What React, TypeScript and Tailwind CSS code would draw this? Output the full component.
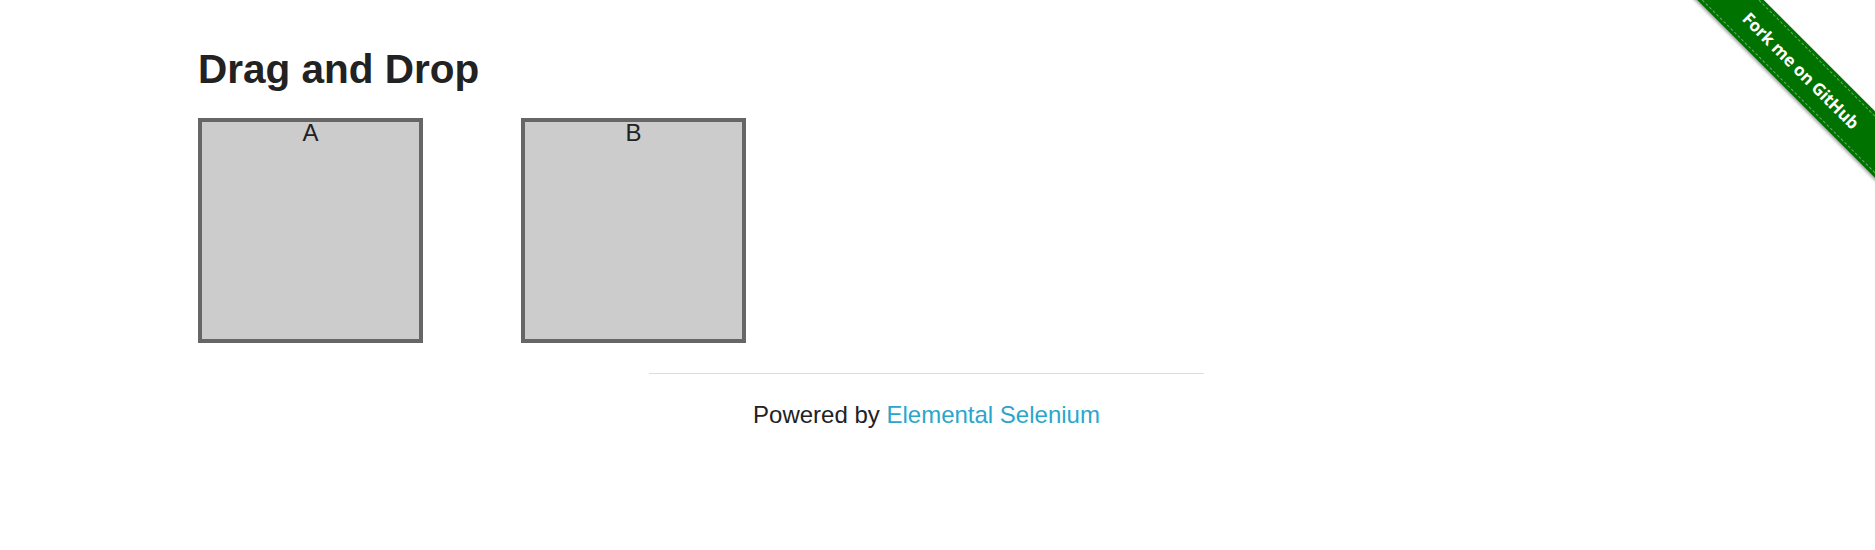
export default function App() {
  return (
    <div className="relative flex h-[550px] w-full flex-col overflow-hidden bg-white font-['Liberation_Sans',Arial,sans-serif] text-[#222]">
      {/* Fork ribbon */}
      <div className="absolute right-[-96px] top-[47px] flex h-[47px] w-[340px] rotate-45 items-center justify-center bg-[#007200] shadow-[0_2px_3px_rgba(0,0,0,0.35)]">
        <div className="absolute inset-x-0 top-[3px] border-t border-dashed border-white/40" />
        <div className="absolute inset-x-0 bottom-[3px] border-b border-dashed border-white/40" />
        <span className="font-['Open_Sans',sans-serif] text-[17px] font-bold tracking-[-0.2px] text-white">
          Fork me on GitHub
        </span>
      </div>

      <div className="flex flex-col gap-[27px] pl-[198px] pt-[47px]">
        <h3 className="text-[40.5px] font-bold leading-[44px]">Drag and Drop</h3>

        <div className="flex gap-[98px]">
          <div className="h-[225px] w-[225px] border-4 border-[#666] bg-[#ccc] text-center text-[24px] leading-[22px]">
            A
          </div>
          <div className="h-[225px] w-[225px] border-4 border-[#666] bg-[#ccc] text-center text-[24px] leading-[22px]">
            B
          </div>
        </div>
      </div>

      <div className="ml-[649px] mt-[30px] flex w-[555px] flex-col gap-[23px]">
        <hr className="border-t border-[#ddd]" />
        <div className="text-center text-[24px] leading-[36px]">
          Powered by <a href="#" className="text-[#2ba6cb]">Elemental Selenium</a>
        </div>
      </div>
    </div>
  )
}
